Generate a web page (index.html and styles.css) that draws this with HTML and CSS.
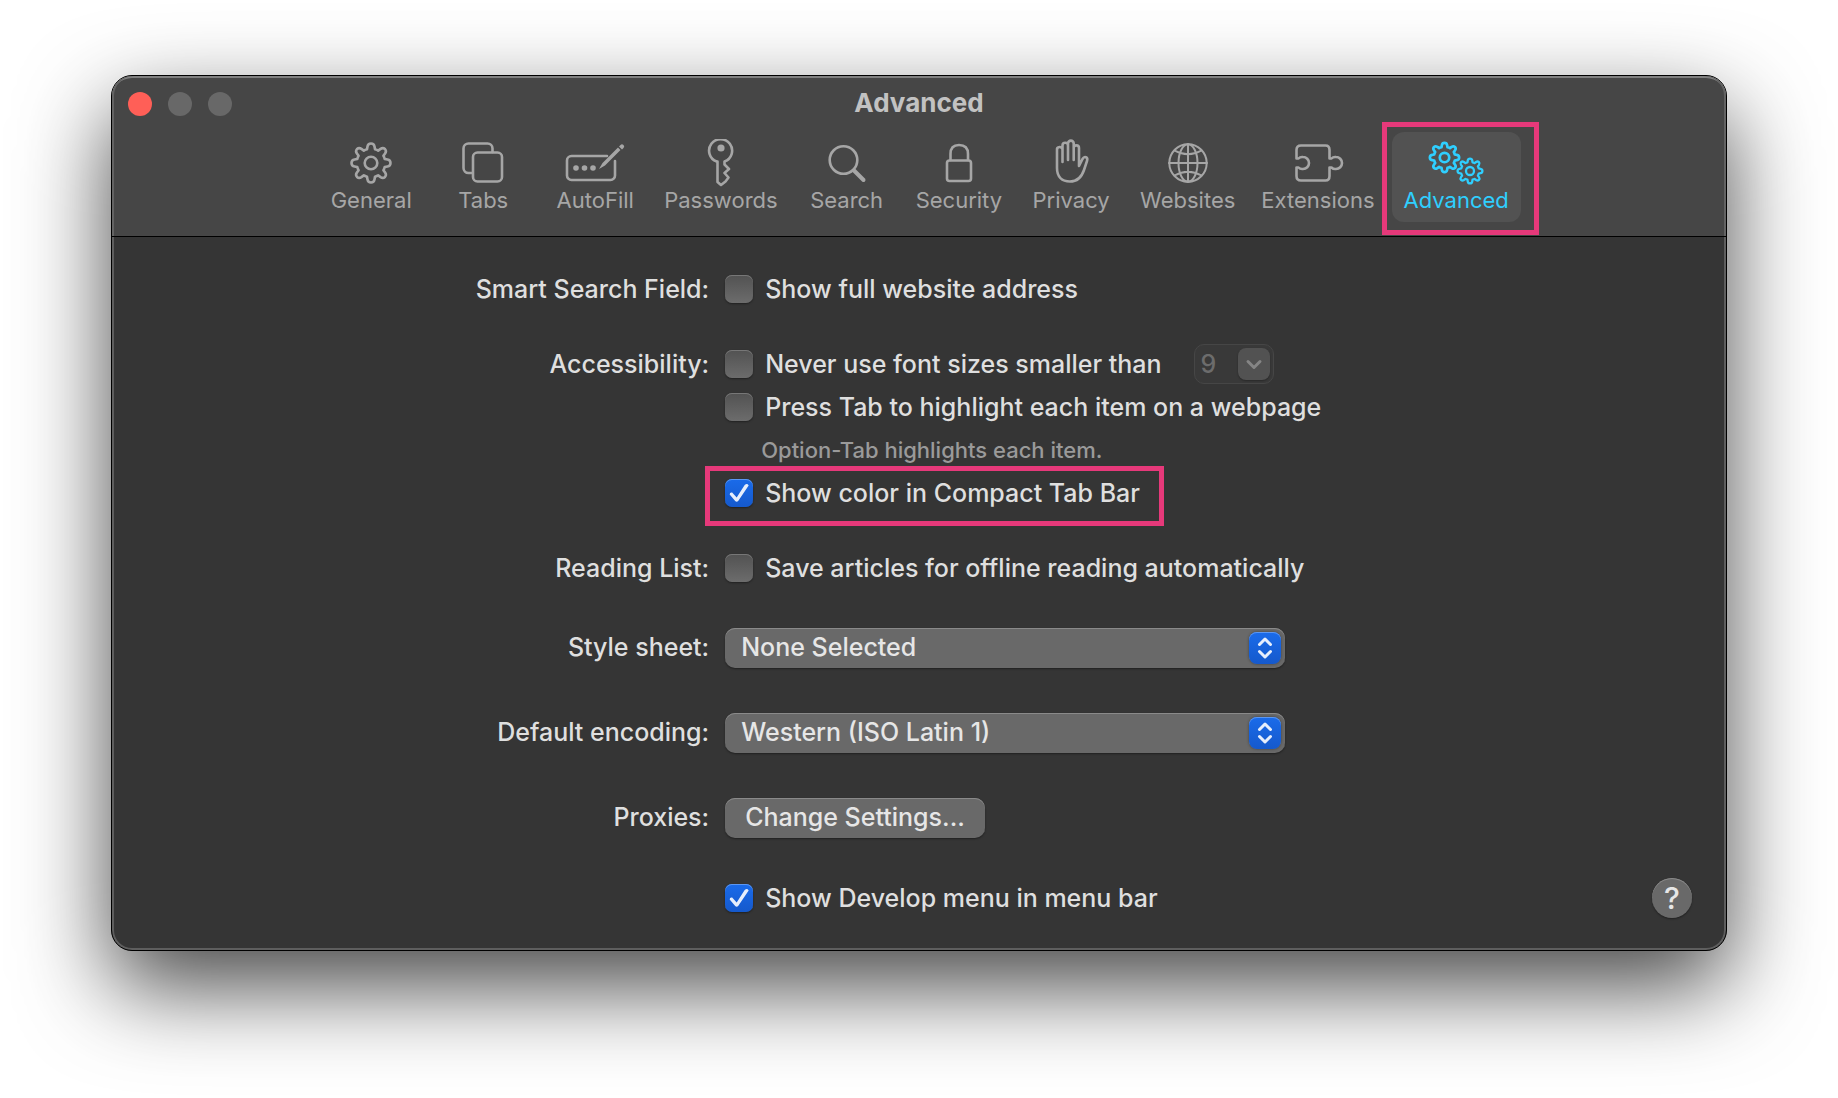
FILE: index.html
```html
<!DOCTYPE html>
<html lang="en">
<head>
<meta charset="utf-8">
<title>Advanced</title>
<link rel="stylesheet" href="styles.css">
</head>
<body>

<!-- shared icon shapes -->
<svg class="defs" aria-hidden="true">
    <symbol id="gear" viewBox="0 0 44 44">
        <path d="M18.5 5.5 Q19 2.5 22 2.5 Q25 2.5 25.5 5.5 L26 8.3 Q28 8.8 29.2 9.6 L31.6 7.9 Q34 6.3 36 8 Q37.8 10 36.1 12.4 L34.4 14.8 Q35.3 16.2 35.7 18 L38.5 18.5 Q41.5 19 41.5 22 Q41.5 25 38.5 25.5 L35.7 26 Q35.3 27.8 34.4 29.2 L36.1 31.6 Q37.8 34 36 36 Q34 37.7 31.6 36.1 L29.2 34.4 Q28 35.2 26 35.7 L25.5 38.5 Q25 41.5 22 41.5 Q19 41.5 18.5 38.5 L18 35.7 Q16 35.2 14.8 34.4 L12.4 36.1 Q10 37.7 8 36 Q6.2 34 7.9 31.6 L9.6 29.2 Q8.7 27.8 8.3 26 L5.5 25.5 Q2.5 25 2.5 22 Q2.5 19 5.5 18.5 L8.3 18 Q8.7 16.2 9.6 14.8 L7.9 12.4 Q6.2 10 8 8 Q10 6.3 12.4 7.9 L14.8 9.6 Q16 8.8 18 8.3 Z"/>
        <circle cx="22" cy="22" r="6.3"/>
    </symbol>
    <symbol id="updown" viewBox="0 0 32 32">
        <path d="M10.5 12.5 L16 7 L21.5 12.5 M10.5 19.5 L16 25 L21.5 19.5"/>
    </symbol>
</svg>

<main class="window">
    <header class="titlebar">
        <div class="title-row">
            <div class="lights">
                <button class="light light-close" aria-label="Close"></button>
                <button class="light" aria-label="Minimize" disabled></button>
                <button class="light" aria-label="Zoom" disabled></button>
            </div>
            <h1 class="title">Advanced</h1>
        </div>
        <nav class="toolbar">
            <button class="tab">
                <svg class="icon" viewBox="0 0 60 48"><use href="#gear" x="8" y="2" width="44" height="44"/></svg>
                General
            </button>
            <button class="tab">
                <svg class="icon" viewBox="0 0 60 48">
                    <path d="M18.5 34 H15.5 A5 5 0 0 1 10.500 29 V9.500 A5 5 0 0 1 15.500 4.500 H34.500 A5 5 0 0 1 39.500 9.500 V13"/>
                    <rect x="20" y="13.500" width="29" height="29" rx="4.500"/>
                </svg>
                Tabs
            </button>
            <button class="tab">
                <svg class="icon" viewBox="0 0 60 48">
                    <path d="M42 17 H6.500 A4.500 4.500 0 0 0 2 21.500 V36.500 A4.500 4.500 0 0 0 6.500 41 H45.500 A4.500 4.500 0 0 0 50 36.500 V22"/>
                    <path class="solid" d="M34 30 L37.500 24 L53 8.500 L55.500 11 L40 26.500 Z M54 7.500 L55.500 6 A2 2 0 0 1 58.500 9 L57 10.500 Z"/>
                    <circle class="solid" cx="11" cy="29" r="2.800"/>
                    <circle class="solid" cx="19.500" cy="29" r="2.800"/>
                    <circle class="solid" cx="28" cy="29" r="2.800"/>
                </svg>
                AutoFill
            </button>
            <button class="tab">
                <svg class="icon" viewBox="0 0 60 48">
                    <path d="M25.700 22.500 A11.500 11.500 0 1 1 33.500 22.500 V25.500 L38 30 L33.500 34 L37.500 38.500 L34.500 42.500 L30 46 L26.500 43 V22.500"/>
                    <circle class="solid" cx="30" cy="9" r="3.600"/>
                </svg>
                Passwords
            </button>
            <button class="tab">
                <svg class="icon" viewBox="0 0 60 48">
                    <circle cx="26.500" cy="21" r="13.800"/>
                    <path class="thick" d="M37 31.500 L46.500 41"/>
                </svg>
                Search
            </button>
            <button class="tab">
                <svg class="icon" viewBox="0 0 60 48">
                    <rect x="18" y="21.500" width="24" height="20.500" rx="2.500"/>
                    <path d="M21.500 21 V15 Q21.500 6 30 6 Q39 6 39 15 V21"/>
                </svg>
                Security
            </button>
            <button class="tab">
                <svg class="icon" viewBox="0 0 60 48">
                    <path d="M21.500 23 V10.500 A2.600 2.600 0 0 0 16 11 V29 C16 38 21 42.500 29 42.500 C37 42.500 41 37 43 31 L46 22 C47.300 18 43.500 16.500 41.500 20 L38 27 V9 A2.600 2.600 0 0 0 32.700 9 M21.500 21 V6.500 A2.700 2.700 0 0 1 27 6.500 V21 M27 6 V4.500 A2.800 2.800 0 0 1 32.700 4.500 V21"/>
                </svg>
                Privacy
            </button>
            <button class="tab">
                <svg class="icon thin" viewBox="0 0 60 48">
                    <circle cx="30" cy="24" r="18.700"/>
                    <ellipse cx="30" cy="24" rx="9.500" ry="18.700"/>
                    <path d="M11 24 H49 M30 5 V43 M16.500 11.500 Q30 19 43.500 11.500 M16.500 36.500 Q30 29 43.500 36.500"/>
                </svg>
                Websites
            </button>
            <button class="tab">
                <svg class="icon" viewBox="0 0 60 48">
                    <path d="M8.500 19.500 V11 Q8.500 6.500 13 6.500 H37.500 Q41.500 6.500 41.500 11 V19.500 H43.500 C45 17.800 46.500 17.800 48 18 A6 6 0 0 1 48 30 C46.500 30.200 45 30 43.500 28.500 H41.500 V37 Q41.500 41.500 37.500 41.500 H13 Q8.500 41.500 8.500 37 V28.500 H10.500 C12 30.200 13.500 30.200 15 30 A6 6 0 0 0 15 18 C13.500 17.800 12 17.800 10.500 19.500 Z"/>
                </svg>
                Extensions
            </button>
            <button class="tab tab-active" aria-current="page">
                <svg class="icon bold" viewBox="0 0 60 48">
                    <use href="#gear" x="2" y="2" width="33" height="33"/>
                    <use href="#gear" x="30" y="18" width="28" height="28"/>
                </svg>
                Advanced
            </button>
        </nav>
    </header>

    <form class="settings">
        <span class="caption">Smart Search Field:</span>
        <label class="check"><input type="checkbox"> Show full website address</label>

        <span class="caption">Accessibility:</span>
        <div class="group">
            <div class="inline">
                <label class="check"><input type="checkbox"> Never use font sizes smaller than</label>
                <span class="combo">
                    <select class="combo-select" aria-label="Minimum font size" disabled>
                        <option>9</option>
                    </select>
                    <svg class="badge badge-off" viewBox="0 0 32 32"><path d="M10 13.500 L16 19.500 L22 13.500"/></svg>
                </span>
            </div>
            <label class="check"><input type="checkbox"> Press Tab to highlight each item on a webpage</label>
            <p class="hint">Option-Tab highlights each item.</p>
            <label class="check marked"><input type="checkbox" checked> Show color in Compact Tab Bar</label>
        </div>

        <span class="caption">Reading List:</span>
        <label class="check"><input type="checkbox"> Save articles for offline reading automatically</label>

        <label class="caption caption-tall" for="stylesheet">Style sheet:</label>
        <span class="popup">
            <select class="popup-select" id="stylesheet">
                <option>None Selected</option>
            </select>
            <svg class="badge"><use href="#updown"/></svg>
        </span>

        <label class="caption caption-tall" for="encoding">Default encoding:</label>
        <span class="popup">
            <select class="popup-select" id="encoding">
                <option>Western (ISO Latin 1)</option>
            </select>
            <svg class="badge"><use href="#updown"/></svg>
        </span>

        <span class="caption caption-tall">Proxies:</span>
        <button class="push" type="button">Change Settings...</button>

        <div class="last-row">
            <label class="check"><input type="checkbox" checked> Show Develop menu in menu bar</label>
            <button class="help" type="button" aria-label="Help">?</button>
        </div>
    </form>
</main>

</body>
</html>
```

FILE: styles.css
```css
* {
    box-sizing: border-box;
}
body {
    margin: 0;
    padding: 75px 111px 0;
    min-height: 100vh;
    background-color: white;
    font-family: Inter, "Liberation Sans", sans-serif;
    font-size: 25px;
    font-weight: 500;
    color: #dfdfdf;
}
button, select, input {
    font: inherit;
    color: inherit;
    margin: 0;
}
.defs {
    position: absolute;
    width: 0;
    height: 0;
}
.window {
    border: 1px solid black;
    border-radius: 21px;
    background-color: #353535;
    box-shadow: inset 0 0 0 2px #5e5e5e, 0 36px 90px rgba(0, 0, 0, 0.72);
}

/* title bar */
.titlebar {
    padding-bottom: 14px;
    border-bottom: 1px solid black;
    border-radius: 20px 20px 0 0;
    background-color: #464646;
    box-shadow: inset 2px 0 0 #636363, inset -2px 0 0 #636363, inset 0 2px 0 #808080;
}
.title-row {
    display: grid;
    grid-template-columns: 1fr auto 1fr;
    align-items: center;
    height: 56px;
    padding: 0 16px;
}
.lights {
    display: flex;
    gap: 16px;
}
.light {
    width: 24px;
    height: 24px;
    padding: 0;
    border: none;
    border-radius: 50%;
    background-color: #686868;
}
.light-close {
    background-color: #ff5f57;
}
.title {
    margin: 0;
    padding-bottom: 3px;
    font-size: 26px;
    font-weight: 700;
    color: #c2c2c2;
}
.toolbar {
    display: flex;
    justify-content: center;
    gap: 8px;
    padding-left: 2px;
}
.tab {
    display: flex;
    flex-direction: column;
    align-items: center;
    min-width: 104px;
    height: 90px;
    padding: 7px 9px 0;
    border: none;
    border-radius: 12px;
    background: none;
    font-size: 22px;
    font-weight: 400;
    line-height: 26px;
    color: #a6a6a6;
}
.tab-active {
    position: relative;
    padding: 7px 12px 0;
    background-color: #525252;
    color: #2fcfff;
}
.icon {
    width: 60px;
    height: 48px;
    fill: none;
    stroke: currentColor;
    stroke-width: 2.6;
    stroke-linecap: round;
    stroke-linejoin: round;
}
.thin {
    stroke-width: 2;
}
.bold {
    stroke-width: 3.6;
}
.thick {
    stroke-width: 4;
}
.solid {
    fill: currentColor;
    stroke: none;
}

/* pink highlight frames */
.tab-active::after, .marked::after {
    content: "";
    position: absolute;
    border: 5px solid #e6397a;
    pointer-events: none;
}
.tab-active::after {
    inset: -10px -18px -13px -10px;
}

/* settings form */
.settings {
    display: grid;
    grid-template-columns: 37% 1fr;
    column-gap: 16px;
    row-gap: 45px;
    justify-items: start;
    padding: 37px 0;
    line-height: 30px;
}
.caption {
    justify-self: end;
}
.caption-tall {
    line-height: 38px;
}
.check {
    display: flex;
    align-items: center;
    gap: 12px;
}
.check input {
    appearance: none;
    width: 28px;
    height: 28px;
    border-radius: 7px;
    background: linear-gradient(#525252, #6c6c6c);
    box-shadow: inset 0 1px 0 #777777, 0 1px 2px rgba(0, 0, 0, 0.4);
}
.check input:checked {
    background: linear-gradient(#1a6bea, #1559cc);
    box-shadow: inset 0 1px 0 #5c97f2, 0 1px 2px rgba(0, 0, 0, 0.4);
}
.check input:checked::before {
    content: "";
    display: block;
    width: 28px;
    height: 28px;
    background-color: #e6eefc;
    clip-path: path("M4.500 15.500 Q4.500 13 7 13.500 L11.500 18.500 L19.500 6 Q22 4 23.500 6.500 L13 22 Q11.500 23.500 10 22 Z");
}
.group {
    display: flex;
    flex-direction: column;
    align-items: flex-start;
    gap: 13px;
}
.inline {
    display: flex;
    align-items: center;
    gap: 32px;
    height: 30px;
}
.hint {
    margin: 0;
    padding-left: 36px;
    font-size: 22px;
    color: #9a9a9a;
}
.marked {
    position: relative;
}
.marked::after {
    inset: -12px -24px -18px -20px;
}

/* pop-up buttons */
.popup, .combo {
    display: grid;
    align-items: center;
}
.popup {
    width: 560px;
}
.popup > *, .combo > * {
    grid-area: 1 / 1;
}
.popup-select, .combo-select {
    appearance: none;
    width: 100%;
    border: none;
    border-radius: 10px;
    color: #e6e6e6;
}
.popup-select, .push, .help {
    height: 40px;
    background-color: #696969;
    box-shadow: inset 0 1px 0 #8a8a8a, 0 1px 2px rgba(0, 0, 0, 0.4);
}
.popup-select {
    padding: 0 48px 2px 16px;
}
.badge {
    justify-self: end;
    width: 32px;
    height: 32px;
    margin-right: 4px;
    border-radius: 8px;
    background: linear-gradient(#1a6bea, #1559cc);
    box-shadow: inset 0 1px 0 #5c97f2, 0 0 3px rgba(0, 0, 0, 0.4);
    fill: none;
    stroke: #e6eefc;
    stroke-width: 3;
    stroke-linecap: round;
    stroke-linejoin: round;
    pointer-events: none;
}
.badge-off {
    background: #525252;
    box-shadow: 0 1px 2px rgba(0, 0, 0, 0.3);
    stroke: #858585;
}
.combo {
    width: 80px;
}
.combo-select {
    height: 40px;
    padding: 0 0 0 6px;
    border: 1px solid #464646;
    background-color: #393939;
    color: #6c6c6c;
    opacity: 1;
}
.push {
    padding: 0 20px 2px;
    border: none;
    border-radius: 10px;
    color: #e6e6e6;
}
.last-row {
    grid-column: 2;
    justify-self: stretch;
    display: flex;
    justify-content: space-between;
    align-items: center;
    height: 30px;
    padding-right: 34px;
}
.help {
    width: 40px;
    padding: 0;
    border: none;
    border-radius: 50%;
    font-size: 30px;
    color: #e6e6e6;
}
```
